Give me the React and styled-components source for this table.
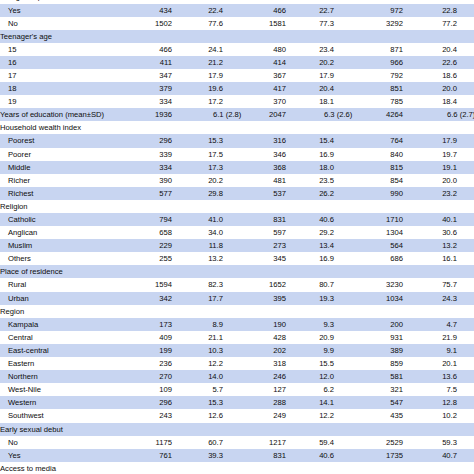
import React from 'react';
import styled, { createGlobalStyle } from 'styled-components';

const GlobalStyle = createGlobalStyle`
  html, body {
    margin: 0;
    padding: 0;
    background: #ffffff;
    overflow: hidden;
  }
  body {
    font-family: "Liberation Sans", Arial, Helvetica, sans-serif;
  }
`;

// Table wrapper: the first row is cut off by the top of the screenshot
const Table = styled.div`
  width: 480px;
  margin-top: -9.6px;
  font-size: 7.65px;
  color: #0d0d0d;
`;

const Row = styled.div`
  display: grid;
  grid-template-columns: 120px 52px 51px 63px 48px 69px 54px 23px;
  height: 13.1px;
  line-height: 13.1px;
  background-color: ${({ $shade }) => ($shade ? '#c8d5f1' : '#ffffff')};
  white-space: nowrap;
`;

const Label = styled.div`
  padding-left: ${({ $sub }) => ($sub ? '8px' : '0')};
  grid-column: ${({ $wide }) => ($wide ? '1 / -1' : 'auto')};
`;

const Num = styled.div`
  text-align: right;
`;

// the (SD) part hangs past the right edge of its column
const Sd = styled.span`
  margin-right: -18.4px;
`;

const rows = [
  { label: 'Living with parents', head: true },
  { label: 'Yes', v: ['434', '22.4', '466', '22.7', '972', '22.8'] },
  { label: 'No', v: ['1502', '77.6', '1581', '77.3', '3292', '77.2'] },
  { label: "Teenager's age", head: true },
  { label: '15', v: ['466', '24.1', '480', '23.4', '871', '20.4'] },
  { label: '16', v: ['411', '21.2', '414', '20.2', '966', '22.6'] },
  { label: '17', v: ['347', '17.9', '367', '17.9', '792', '18.6'] },
  { label: '18', v: ['379', '19.6', '417', '20.4', '851', '20.0'] },
  { label: '19', v: ['334', '17.2', '370', '18.1', '785', '18.4'] },
  {
    label: 'Years of education (mean±SD)',
    top: true,
    v: ['1936', ['6.1', '2.8'], '2047', ['6.3', '2.6'], '4264', ['6.6', '2.7']],
  },
  { label: 'Household wealth index', head: true },
  { label: 'Poorest', v: ['296', '15.3', '316', '15.4', '764', '17.9'] },
  { label: 'Poorer', v: ['339', '17.5', '346', '16.9', '840', '19.7'] },
  { label: 'Middle', v: ['334', '17.3', '368', '18.0', '815', '19.1'] },
  { label: 'Richer', v: ['390', '20.2', '481', '23.5', '854', '20.0'] },
  { label: 'Richest', v: ['577', '29.8', '537', '26.2', '990', '23.2'] },
  { label: 'Religion', head: true },
  { label: 'Catholic', v: ['794', '41.0', '831', '40.6', '1710', '40.1'] },
  { label: 'Anglican', v: ['658', '34.0', '597', '29.2', '1304', '30.6'] },
  { label: 'Muslim', v: ['229', '11.8', '273', '13.4', '564', '13.2'] },
  { label: 'Others', v: ['255', '13.2', '345', '16.9', '686', '16.1'] },
  { label: 'Place of residence', head: true },
  { label: 'Rural', v: ['1594', '82.3', '1652', '80.7', '3230', '75.7'] },
  { label: 'Urban', v: ['342', '17.7', '395', '19.3', '1034', '24.3'] },
  { label: 'Region', head: true },
  { label: 'Kampala', v: ['173', '8.9', '190', '9.3', '200', '4.7'] },
  { label: 'Central', v: ['409', '21.1', '428', '20.9', '931', '21.9'] },
  { label: 'East-central', v: ['199', '10.3', '202', '9.9', '389', '9.1'] },
  { label: 'Eastern', v: ['236', '12.2', '318', '15.5', '859', '20.1'] },
  { label: 'Northern', v: ['270', '14.0', '246', '12.0', '581', '13.6'] },
  { label: 'West-Nile', v: ['109', '5.7', '127', '6.2', '321', '7.5'] },
  { label: 'Western', v: ['296', '15.3', '288', '14.1', '547', '12.8'] },
  { label: 'Southwest', v: ['243', '12.6', '249', '12.2', '435', '10.2'] },
  { label: 'Early sexual debut', head: true },
  { label: 'No', v: ['1175', '60.7', '1217', '59.4', '2529', '59.3'] },
  { label: 'Yes', v: ['761', '39.3', '831', '40.6', '1735', '40.7'] },
  { label: 'Access to media', head: true },
  { label: '', head: true },
];

const Cell = ({ value }) =>
  Array.isArray(value) ? (
    <Num>
      {value[0]}
      <Sd> ({value[1]})</Sd>
    </Num>
  ) : (
    <Num>{value}</Num>
  );

const App = () => {
  return (
    <>
      <GlobalStyle />
      <Table>
        {rows.map((r, i) => (
          <Row key={i} $shade={i % 2 === 1}>
            <Label $sub={!r.head && !r.top} $wide={r.head}>
              {r.label}
            </Label>
            {r.v && r.v.map((val, j) => <Cell key={j} value={val} />)}
          </Row>
        ))}
      </Table>
    </>
  );
};

export default App;
